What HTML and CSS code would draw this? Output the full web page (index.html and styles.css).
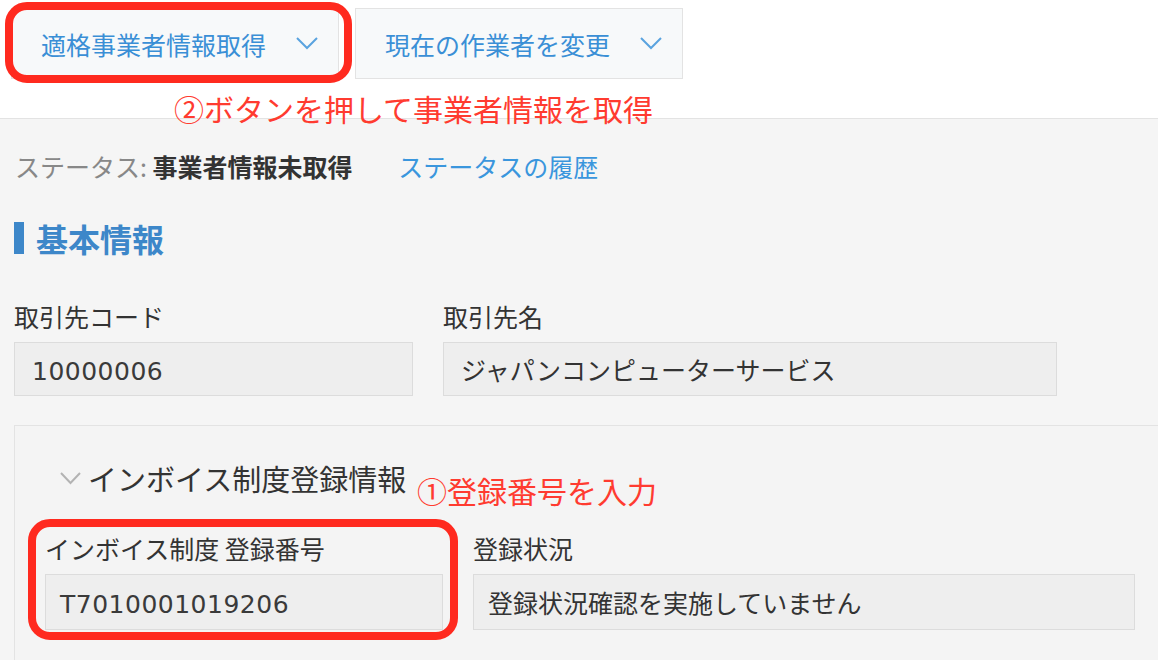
FILE: index.html
```html
<!DOCTYPE html>
<html lang="ja">
  <head>
    <meta charset="UTF-8" />
    <meta name="viewport" content="width=device-width, initial-scale=1.0" />
    <title>取引先 – 適格事業者情報</title>
    <link rel="stylesheet" href="styles.css">
  </head>
  <body>
    <div class="page">
      <div class="toolbar">
        <button class="menu-btn">
          <span>適格事業者情報取得</span>
          <svg class="chev" width="22" height="13" viewBox="0 0 22 13"><polyline points="1,1 11,11 21,1" /></svg>
        </button>
        <button class="menu-btn">
          <span>現在の作業者を変更</span>
          <svg class="chev" width="22" height="13" viewBox="0 0 22 13"><polyline points="1,1 11,11 21,1" /></svg>
        </button>
      </div>

      <div class="content">
        <div class="status">
          <span class="status-label">ステータス:</span>
          <strong class="status-value">事業者情報未取得</strong>
          <a class="status-link" href="#">ステータスの履歴</a>
        </div>

        <h2 class="section-title">基本情報</h2>

        <div class="fields">
          <div class="field field-code">
            <label>取引先コード</label>
            <div class="input input-num">10000006</div>
          </div>
          <div class="field field-name">
            <label>取引先名</label>
            <div class="input">ジャパンコンピューターサービス</div>
          </div>
        </div>

        <div class="panel">
          <div class="panel-title">
            <svg class="panel-chev" width="21" height="13" viewBox="0 0 21 13"><polyline points="1,1 10.5,11 20,1" /></svg>
            <span>インボイス制度登録情報</span>
          </div>
          <div class="fields">
            <div class="field field-invoice">
              <label>インボイス制度 登録番号</label>
              <div class="input input-num">T7010001019206</div>
            </div>
            <div class="field field-state">
              <label>登録状況</label>
              <div class="input">登録状況確認を実施していません</div>
            </div>
          </div>
        </div>
      </div>

      <!-- annotations -->
      <div class="mark mark-btn"></div>
      <div class="note note-btn">②ボタンを押して事業者情報を取得</div>
      <div class="mark mark-input"></div>
      <div class="note note-input">①登録番号を入力</div>
    </div>
  </body>
</html>
```

FILE: styles.css
```css
body {
  margin: 0;
  font-family: "Noto Sans CJK JP", "Noto Sans", sans-serif;
  color: #333;
  background: #f5f5f5;
}
.page {
  position: relative;
  height: 660px;
  overflow: hidden;
}
.toolbar {
  display: flex;
  gap: 16px;
  height: 110px;
  padding: 8px 0 0 11px;
  background: #fff;
}
.menu-btn {
  display: flex;
  align-items: center;
  justify-content: space-between;
  width: 328px;
  height: 71px;
  padding: 0 20px 0 29px;
  border: 1px solid #e3e3e3;
  background: #f7f9fa;
  color: #3a8fd6;
  font-family: inherit;
  font-size: 25px;
}
.chev polyline {
  fill: none;
  stroke: #5aa3df;
  stroke-width: 2;
}
.content {
  border-top: 1px solid #e3e3e3;
  padding: 30px 0 0 14px;
}
.status {
  font-size: 25px;
  line-height: 34px;
  padding-left: 1px;
}
.status-label {
  color: #888;
}
.status-value {
  color: #333;
}
.status-link {
  margin-left: 40px;
  color: #3a96dd;
  text-decoration: none;
}
.section-title {
  display: flex;
  align-items: center;
  gap: 12px;
  margin: 35px 0 0;
  font-size: 32px;
  line-height: 40px;
  color: #3d87c9;
}
.section-title::before {
  content: "";
  width: 10px;
  height: 32px;
  background: #3d87c9;
}
.fields {
  display: flex;
  gap: 30px;
}
.content > .fields {
  margin-top: 41px;
}
.field label {
  display: block;
  font-size: 25px;
  line-height: 34px;
  margin-bottom: 9px;
}
.input {
  box-sizing: border-box;
  height: 54px;
  padding-left: 17px;
  border: 1px solid #dcdcdc;
  background: #eee;
  font-size: 25px;
  line-height: 52px;
}
.input-num {
  padding-top: 3px;
  font-family: "DejaVu Sans", "Noto Sans CJK JP", sans-serif;
  letter-spacing: 0.5px;
  color: #3a3a3a;
}
.field-code .input {
  width: 399px;
}
.field-name .input {
  width: 614px;
}
.panel {
  margin-top: 29px;
  border-top: 1px solid #e3e3e3;
  border-left: 1px solid #e3e3e3;
  background: #f4f4f4;
  padding: 34px 0 0 30px;
  height: 300px;
}
.panel-title {
  display: flex;
  align-items: center;
  gap: 7px;
  padding-left: 15px;
  font-size: 29px;
  line-height: 36px;
}
.panel-chev polyline {
  fill: none;
  stroke: #b3b3b3;
  stroke-width: 2;
}
.panel .fields {
  margin-top: 35px;
}
.panel .field label {
  margin-bottom: 9px;
}
.panel .input {
  height: 56px;
  line-height: 54px;
  padding-left: 14px;
}
.field-invoice .input {
  width: 398px;
}
.field-state .input {
  width: 662px;
}
.mark {
  position: absolute;
  border: 8px solid #ff2a1f;
  border-radius: 22px;
}
.mark-btn {
  left: 5px;
  top: 2px;
  width: 331px;
  height: 65px;
}
.mark-input {
  left: 28px;
  top: 519px;
  width: 414px;
  height: 105px;
}
.note {
  position: absolute;
  color: #ff3b30;
  font-size: 30px;
  line-height: 36px;
  white-space: nowrap;
}
.note-btn {
  left: 174px;
  top: 90px;
}
.note-input {
  left: 417px;
  top: 472px;
}
```
